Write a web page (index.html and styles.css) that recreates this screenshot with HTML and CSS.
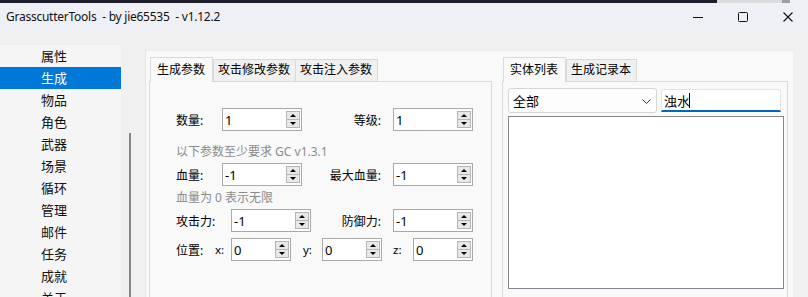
FILE: index.html
```html
<!DOCTYPE html>
<html lang="zh-CN">
<head>
<meta charset="utf-8">
<title>GrasscutterTools</title>
<link rel="stylesheet" href="styles.css">
</head>
<body>
<div class="topstrip"><div class="dark"></div><div class="light"></div><div class="mark"></div><div class="light2"></div></div>
<div class="titlebar">
  <span class="title">GrasscutterTools  - by jie65535  - v1.12.2</span>
  <div class="controls">
    <div class="ctl"><svg width="10" height="10" viewBox="0 0 10 10"><path d="M0 5.5H10" stroke="#111" stroke-width="1"/></svg></div>
    <div class="ctl"><svg width="10" height="10" viewBox="0 0 10 10"><rect x="0.5" y="0.5" width="9" height="9" rx="1" fill="none" stroke="#111" stroke-width="1"/></svg></div>
    <div class="ctl"><svg width="10" height="10" viewBox="0 0 10 10"><path d="M0.5 0.5L9.5 9.5M9.5 0.5L0.5 9.5" stroke="#111" stroke-width="1.1"/></svg></div>
  </div>
</div>
<div class="main">
  <ul class="nav">
    <li>属性</li>
    <li class="sel">生成</li>
    <li>物品</li>
    <li>角色</li>
    <li>武器</li>
    <li>场景</li>
    <li>循环</li>
    <li>管理</li>
    <li>邮件</li>
    <li>任务</li>
    <li>成就</li>
    <li>关于</li>
  </ul>
  <div class="vscroll"><div class="thumb"></div></div>
  <div class="panel">
    <div class="tabs tabs-left">
      <div class="tabstrip">
        <div class="tab active">生成参数</div>
        <div class="tab">攻击修改参数</div>
        <div class="tab">攻击注入参数</div>
      </div>
      <div class="tabbody form">
        <div class="row">
          <span class="lbl w46">数量:</span>
          <div class="spin w80"><span class="val">1</span><div class="btns"><i class="up"></i><i class="dn"></i></div></div>
          <span class="lbl r w91">等级:</span>
          <div class="spin w80"><span class="val">1</span><div class="btns"><i class="up"></i><i class="dn"></i></div></div>
        </div>
        <div class="note n1">以下参数至少要求 GC v1.3.1</div>
        <div class="row r3">
          <span class="lbl w46">血量:</span>
          <div class="spin w80"><span class="val">-1</span><div class="btns"><i class="up"></i><i class="dn"></i></div></div>
          <span class="lbl r w91">最大血量:</span>
          <div class="spin w80"><span class="val">-1</span><div class="btns"><i class="up"></i><i class="dn"></i></div></div>
        </div>
        <div class="note n2">血量为 0 表示无限</div>
        <div class="row r5">
          <span class="lbl w55">攻击力:</span>
          <div class="spin w80"><span class="val">-1</span><div class="btns"><i class="up"></i><i class="dn"></i></div></div>
          <span class="lbl r w82">防御力:</span>
          <div class="spin w80"><span class="val">-1</span><div class="btns"><i class="up"></i><i class="dn"></i></div></div>
        </div>
        <div class="row r6">
          <span class="lbl w39">位置:</span>
          <span class="lbl w16 small">x:</span>
          <div class="spin w60"><span class="val">0</span><div class="btns"><i class="up"></i><i class="dn"></i></div></div>
          <span class="lbl w31 small pl12">y:</span>
          <div class="spin w60"><span class="val">0</span><div class="btns"><i class="up"></i><i class="dn"></i></div></div>
          <span class="lbl w31 small pl11">z:</span>
          <div class="spin w60"><span class="val">0</span><div class="btns"><i class="up"></i><i class="dn"></i></div></div>
        </div>
      </div>
    </div>
    <div class="tabs tabs-right">
      <div class="tabstrip">
        <div class="tab active">实体列表</div>
        <div class="tab">生成记录本</div>
      </div>
      <div class="tabbody list-body">
        <div class="filters">
          <div class="combo"><span>全部</span><svg width="9" height="5" viewBox="0 0 9 5"><path d="M0.5 0.5L4.5 4.5L8.5 0.5" fill="none" stroke="#333" stroke-width="1"/></svg></div>
          <div class="search"><span>浊水</span><i class="caret"></i></div>
        </div>
        <div class="listbox"></div>
      </div>
    </div>
  </div>
</div>
</body>
</html>
```

FILE: styles.css
```css
html, body {
  margin: 0;
  padding: 0;
}
body {
  width: 808px;
  height: 297px;
  overflow: hidden;
  background: #f0f0f0;
  font-family: "Noto Sans", "Noto Sans CJK SC", sans-serif;
  color: #000;
}
.topstrip {
  display: flex;
  height: 3px;
}
.topstrip .dark { width: 717px; background: #1d1c2b; }
.topstrip .light { width: 65px; background: #dcdcdf; }
.topstrip .mark { width: 8px; background: #9d9da2; }
.topstrip .light2 { flex: 1; background: #eef0f5; }

.titlebar {
  height: 30px;
  background: #eff0f6;
  display: flex;
  align-items: center;
}
.title {
  white-space: pre;
  font-family: "Noto Sans", sans-serif;
  font-size: 12px;
  letter-spacing: -0.25px;
  padding-left: 6px;
  line-height: 16px;
  margin-top: -2px;
  color: #111;
}
.controls {
  margin-left: auto;
  display: flex;
  margin-right: -2px;
}
.ctl {
  width: 45px;
  height: 30px;
  display: flex;
  align-items: center;
  justify-content: center;
}
.ctl svg { display: block; margin-top: -2px; }

.main {
  display: flex;
  height: 264px;
}
.nav {
  list-style: none;
  margin: 12px 0 0 0;
  padding: 0;
  width: 121px;
  background: #f5f5f5;
  font-size: 13px;
}
.nav li {
  height: 22px;
  line-height: 22px;
  padding-left: 41px;
  color: #111;
}
.nav li.sel {
  background: #0078d7;
  color: #fff;
}
.vscroll {
  width: 24px;
}
.thumb {
  margin-top: 100px;
  margin-left: 8px;
  width: 2px;
  height: 170px;
  background: #868686;
}
.panel {
  margin-top: 17px;
  width: 648px;
  background: #f9f9f9;
  border-left: 1px solid #e6e6e6;
  border-top: 1px solid #ececec;
  padding: 6px 0 0 3px;
  display: flex;
  gap: 10px;
  box-sizing: border-box;
  height: 260px;
}
.tabs {
  display: flex;
  flex-direction: column;
}
.tabs-left { width: 343px; }
.tabs-right { width: 286px; }
.tabstrip {
  display: flex;
  align-items: flex-end;
  height: 24px;
  padding-left: 1px;
}
.tab {
  box-sizing: border-box;
  height: 22px;
  line-height: 20px;
  font-size: 12px;
  padding: 0 5px 0 4px;
  border: 1px solid #dadada;
  border-bottom: none;
  background: #f0f0f0;
  margin-left: -1px;
  white-space: nowrap;
}
.tab.active {
  height: 25px;
  line-height: 23px;
  padding: 0 7px 0 6px;
  background: #f9f9f9;
  margin-bottom: -1px;
  margin-left: 0;
  position: relative;
  z-index: 1;
}
.tab.active + .tab { margin-left: 0; }
.tabbody {
  flex: 1;
  border: 1px solid #dadada;
  background: #f9f9f9;
}
.form {
  padding: 26px 0 0 26px;
  font-size: 12px;
}
.row {
  display: flex;
  align-items: center;
  height: 23px;
}
.r3 { margin-top: 3px; }
.r5 { margin-top: 3px; }
.r6 { margin-top: 6px; }
.note {
  color: #8b8b8b;
  height: 16px;
  line-height: 16px;
  font-size: 12px;
}
.n1 { margin-top: 13px; }
.n2 { margin-top: 4px; }
.lbl {
  display: block;
  white-space: nowrap;
  box-sizing: border-box;
}
.lbl.r { text-align: right; padding-right: 12px; }
.small { font-size: 11.5px; }
.pl12 { padding-left: 12px; }
.pl11 { padding-left: 11px; }
.w16 { width: 16px; }
.w31 { width: 31px; }
.w39 { width: 39px; }
.w46 { width: 46px; }
.w55 { width: 55px; }
.w82 { width: 82px; }
.w91 { width: 91px; }
.w60 { width: 60px; }
.w80 { width: 80px; }
.spin {
  box-sizing: border-box;
  height: 23px;
  border: 1px solid #a9a9a9;
  background: #fff;
  display: flex;
  align-items: center;
}
.val {
  flex: 1;
  padding-left: 2px;
  font-size: 13px;
  line-height: 16px;
}
.btns {
  display: flex;
  flex-direction: column;
  width: 14px;
  margin-right: 1px;
}
.btns i {
  box-sizing: border-box;
  height: 9px;
  background: #e8e8e8;
  border: 1px solid #b5b5b5;
  display: flex;
  align-items: center;
  justify-content: center;
}
.btns i.dn { border-top: none; height: 8px; }
.btns i.up::before {
  content: "";
  border-left: 3px solid transparent;
  border-right: 3px solid transparent;
  border-bottom: 3px solid #000;
}
.btns i.dn::before {
  content: "";
  border-left: 3px solid transparent;
  border-right: 3px solid transparent;
  border-top: 3px solid #000;
}
.list-body {
  padding: 6px 0 0 5px;
}
.filters {
  display: flex;
  align-items: flex-start;
  gap: 4px;
}
.combo {
  box-sizing: border-box;
  width: 149px;
  height: 25px;
  border: 1px solid #d6d6d6;
  border-radius: 3px;
  background: #fdfdfd;
  display: flex;
  align-items: center;
  padding: 0 5px 0 4px;
  font-size: 13px;
}
.combo span { flex: 1; }
.combo svg { display: block; margin-top: 1px; }
.search {
  box-sizing: border-box;
  width: 120px;
  height: 23px;
  margin-top: 1px;
  background: #fff;
  border: 1px solid #e4e4e4;
  border-bottom: 2px solid #0067c0;
  border-radius: 3px 3px 0 0;
  display: flex;
  align-items: center;
  padding-left: 2px;
  font-size: 13px;
}
.caret {
  display: block;
  width: 1px;
  height: 15px;
  background: #000;
  margin-left: -1px;
}
.listbox {
  box-sizing: border-box;
  margin-top: 3px;
  width: 276px;
  height: 173px;
  border: 1px solid #83878e;
  background: #fff;
}
```
